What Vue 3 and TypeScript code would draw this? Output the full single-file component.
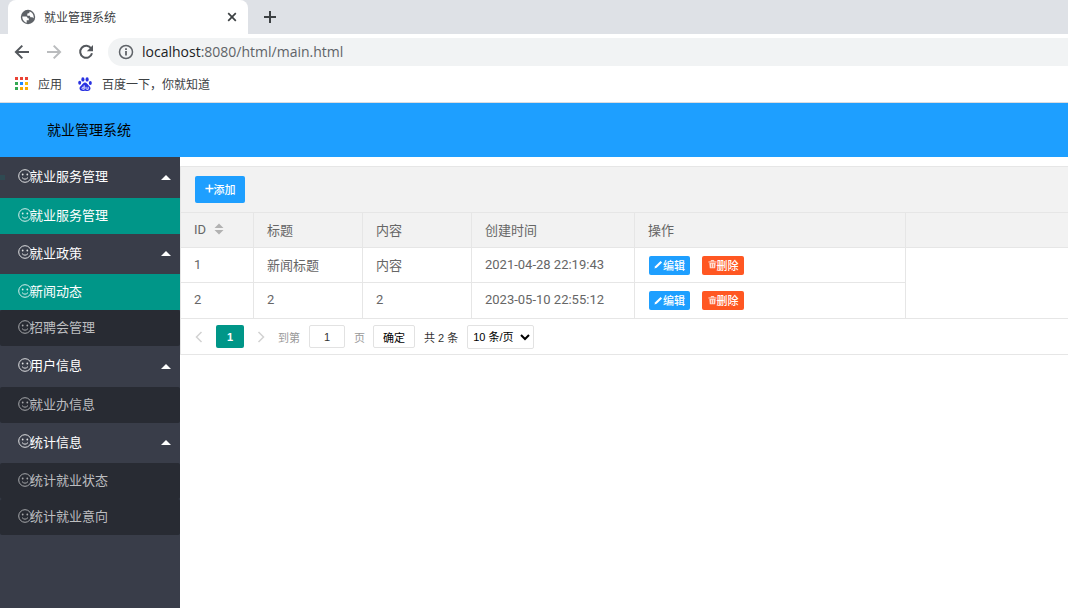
<script setup lang="ts">
import { ref } from 'vue'

interface MenuItem { label: string; active?: boolean }
interface MenuGroup { label: string; children: MenuItem[] }
interface NewsRow { id: number; title: string; content: string; created: string }

const menu: MenuGroup[] = [
  { label: '就业服务管理', children: [{ label: '就业服务管理', active: true }] },
  { label: '就业政策', children: [{ label: '新闻动态', active: true }, { label: '招聘会管理' }] },
  { label: '用户信息', children: [{ label: '就业办信息' }] },
  { label: '统计信息', children: [{ label: '统计就业状态' }, { label: '统计就业意向' }] },
]

const rows: NewsRow[] = [
  { id: 1, title: '新闻标题', content: '内容', created: '2021-04-28 22:19:43' },
  { id: 2, title: '2', content: '2', created: '2023-05-10 22:55:12' },
]

const appColors = ['#ea4335', '#ea4335', '#ea4335', '#34a853', '#1e88ff', '#fbbc04', '#34a853', '#f9ab00', '#f9ab00']
const page = ref('1')
const limit = ref('10')
</script>

<template>
  <div class="window">
    <div class="tabstrip">
      <div class="tab">
        <svg class="globe" viewBox="0 0 16 16" aria-hidden="true">
          <circle cx="8" cy="8" r="7.2" fill="#5f6368" />
          <path d="M2.300 7.600h3.400c1.300 0 1.800.7 1.800 1.700h1.300v1.900H6.700v2.600C4.200 13.300 2.200 10.800 2.300 7.600z" fill="#fff" />
          <path d="M9.600 2.500c2.400.7 4.100 2.900 4.100 5.500l-.2 1.300c-.6-.5-.9-1-1.700-1h-.9c-.7 0-.9-.7-.9-1.500H7.300V5.200c0-.6.500-.9 1-.9h.9z" fill="#fff" />
        </svg>
        <span class="tab-title">就业管理系统</span>
        <button class="icon-btn close" aria-label="关闭标签页">
          <svg viewBox="0 0 10 10"><path d="M1.200 1.200l7.600 7.600M8.800 1.200L1.200 8.800" stroke="#3c4043" stroke-width="1.700" /></svg>
        </button>
      </div>
      <button class="icon-btn plus" aria-label="新标签页">
        <svg viewBox="0 0 12 12"><path d="M6 0v12M0 6h12" stroke="#3c4043" stroke-width="2" /></svg>
      </button>
    </div>

    <div class="toolbar">
      <button class="icon-btn nav" aria-label="后退">
        <svg viewBox="0 0 16 16"><path d="M15 8H2.500M8.300 1.600L1.900 8l6.400 6.400" fill="none" stroke="#54585d" stroke-width="2" /></svg>
      </button>
      <button class="icon-btn nav" aria-label="前进">
        <svg viewBox="0 0 16 16"><path d="M1 8h12.500M7.700 1.600L14.100 8l-6.400 6.400" fill="none" stroke="#babcbe" stroke-width="2" /></svg>
      </button>
      <button class="icon-btn nav" aria-label="重新加载">
        <svg viewBox="0 0 16 16">
          <path d="M13.200 4.500A6 6 0 1 0 14 9.300" fill="none" stroke="#54585d" stroke-width="2" />
          <path d="M15 1v6.200H8.800z" fill="#54585d" />
        </svg>
      </button>
      <div class="address">
        <svg class="info" viewBox="0 0 16 16" aria-hidden="true">
          <circle cx="8" cy="8" r="6.500" fill="none" stroke="#5f6368" stroke-width="1.500" />
          <path d="M8 7v4.500M8 4.300v1.700" stroke="#5f6368" stroke-width="1.800" />
        </svg>
        <span class="url"><b>localhost</b>:8080/html/main.html</span>
      </div>
    </div>

    <div class="bookmarks">
      <a href="#apps">
        <svg class="apps" viewBox="0 0 13 13" aria-hidden="true">
          <rect v-for="(color, i) in appColors" :key="i" :x="(i % 3) * 5" :y="Math.floor(i / 3) * 5" width="3" height="3" :fill="color" />
        </svg>
        应用
      </a>
      <a href="#baidu">
        <svg class="paw" viewBox="0 0 14 14" aria-hidden="true">
          <g fill="#2932e1">
            <ellipse cx="4.900" cy="2.400" rx="1.600" ry="2.200" />
            <ellipse cx="9.100" cy="2.400" rx="1.600" ry="2.200" />
            <ellipse cx="1.700" cy="5.700" rx="1.500" ry="2" />
            <ellipse cx="12.300" cy="5.900" rx="1.500" ry="2" />
            <path d="M7 5.500c1.600 0 2.400 1.600 3.500 2.700 1.400 1.300 2.300 2.200 1.900 3.900-.5 2-2.300 2-5.400 1.600-3.100.4-4.900.4-5.400-1.600-.4-1.700.5-2.600 1.900-3.900C4.600 7.100 5.400 5.500 7 5.500z" />
          </g>
          <path d="M6.200 8.300v4M6.200 10.200H4.500q-1.200 1 0 2h1.700M8 9.800v1.800q.3.700 1 .7h1.200V9.800" fill="none" stroke="#fff" stroke-width=".9" />
        </svg>
        百度一下，你就知道
      </a>
    </div>

    <header class="header"><h1>就业管理系统</h1></header>

    <div class="body">
      <nav class="side">
        <span class="side-bar"></span>
        <div v-for="group in menu" :key="group.label" class="group">
          <button class="menu-row head">
            <svg class="smile" viewBox="0 0 14 14" aria-hidden="true">
              <circle cx="7" cy="7" r="6.300" /><path d="M4 8.600q3 3.200 6 0" />
              <circle class="eye" cx="4.700" cy="5.500" r=".9" /><circle class="eye" cx="9.300" cy="5.500" r=".9" />
            </svg>
            <span>{{ group.label }}</span>
            <i class="caret"></i>
          </button>
          <a v-for="item in group.children" :key="item.label" href="#menu" class="menu-row item" :class="{ active: item.active }">
            <svg class="smile" viewBox="0 0 14 14" aria-hidden="true">
              <circle cx="7" cy="7" r="6.300" /><path d="M4 8.600q3 3.200 6 0" />
              <circle class="eye" cx="4.700" cy="5.500" r=".9" /><circle class="eye" cx="9.300" cy="5.500" r=".9" />
            </svg>
            <span>{{ item.label }}</span>
          </a>
        </div>
      </nav>

      <main class="content">
        <section class="view">
          <div class="table-tools">
            <button class="btn add">
              <svg viewBox="0 0 10 10" aria-hidden="true"><path d="M5 .5v9M.5 5h9" stroke="#fff" stroke-width="1.700" /></svg>添加
            </button>
          </div>
          <table>
            <colgroup><col class="c-id"><col class="c-text"><col class="c-text"><col class="c-time"><col class="c-ops"><col></colgroup>
            <thead>
              <tr>
                <th>
                  <span class="sortable">ID
                    <svg class="sort" viewBox="0 0 10 12" aria-hidden="true"><path d="M5 .5L9.500 5h-9zM.5 7h9L5 11.500z" fill="#b2b2b2" /></svg>
                  </span>
                </th>
                <th>标题</th><th>内容</th><th>创建时间</th><th>操作</th><th class="filler"></th>
              </tr>
            </thead>
            <tbody>
              <tr v-for="row in rows" :key="row.id">
                <td>{{ row.id }}</td>
                <td>{{ row.title }}</td>
                <td>{{ row.content }}</td>
                <td>{{ row.created }}</td>
                <td>
                  <div class="ops">
                    <button class="btn small">
                      <svg viewBox="0 0 10 10" aria-hidden="true"><path d="M.5 9.500l.8-2.500L7.300 1l1.700 1.700L3 8.700z" fill="#fff" /></svg>编辑
                    </button>
                    <button class="btn small danger">
                      <svg viewBox="0 0 10 10" aria-hidden="true">
                        <path d="M3.500 1.500V.7h3v.8M.5 2.200h9" fill="none" stroke="#fff" />
                        <path d="M1.500 3.200h7l-.5 6H2z" fill="#fff" opacity=".8" />
                        <path d="M3.900 4.200v4M6.100 4.200v4" stroke="#ff5722" stroke-width=".6" />
                      </svg>删除
                    </button>
                  </div>
                </td>
                <td class="filler"></td>
              </tr>
            </tbody>
          </table>
          <div class="pager">
            <button class="arrow" aria-label="上一页"><svg viewBox="0 0 8 12"><path d="M6.500 1l-5 5 5 5" /></svg></button>
            <button class="current">1</button>
            <button class="arrow" aria-label="下一页"><svg viewBox="0 0 8 12"><path d="M1.500 1l5 5-5 5" /></svg></button>
            <label class="jump">到第<input v-model="page" type="text">页</label>
            <button class="confirm">确定</button>
            <span class="count">共 2 条</span>
            <select v-model="limit" aria-label="每页条数">
              <option value="10">10 条/页</option>
              <option value="20">20 条/页</option>
            </select>
          </div>
        </section>
      </main>
    </div>
  </div>
</template>

<style>
body { margin: 0; }
</style>

<style scoped>
* { box-sizing: border-box; }
.window {
  display: flex;
  flex-direction: column;
  min-height: 100vh;
  background: #fff;
  font-family: "Liberation Sans", "Noto Sans CJK SC", sans-serif;
  font-size: 13px;
}
button, input, select { font-family: inherit; margin: 0; }
a { text-decoration: none; }
svg { display: block; flex: none; }

.tabstrip { display: flex; height: 34px; background: #dee1e6; padding-left: 8px; }
.tab {
  display: flex;
  align-items: center;
  width: 240px;
  padding: 0 11px 0 12px;
  background: #fff;
  border-radius: 8px 8px 0 0;
}
.globe { width: 16px; height: 16px; }
.tab-title { flex: 1; margin-left: 8px; padding-bottom: 2px; font-size: 12px; color: #3c4043; }
.icon-btn { display: flex; align-items: center; justify-content: center; padding: 0; border: 0; background: none; }
.close svg { width: 10px; height: 10px; }
.plus { margin-left: 16px; }
.plus svg { width: 12px; height: 12px; }

.toolbar { display: flex; align-items: center; gap: 16px; height: 36px; padding-left: 14px; }
.nav svg { width: 16px; height: 16px; }
.address {
  display: flex;
  flex: 1;
  align-items: center;
  gap: 8px;
  height: 28px;
  margin-left: -2px;
  padding-left: 10px;
  background: #f1f3f4;
  border-radius: 14px 0 0 14px;
}
.info { width: 16px; height: 16px; }
.url { font: 14px/20px "Open Sans", sans-serif; color: #5f6368; }
.url b { font-weight: 400; color: #202124; }

.bookmarks {
  display: flex;
  gap: 16px;
  height: 33px;
  padding: 0 15px 5px;
  border-bottom: 1px solid #dadce0;
  font-size: 12px;
}
.bookmarks a { display: flex; align-items: center; gap: 10px; color: #3c4043; }
.apps { width: 13px; height: 13px; }
.paw { width: 14px; height: 14px; }

.header { display: flex; align-items: center; height: 54px; padding: 0 0 2px 47px; background: #1e9fff; }
h1 { margin: 0; font-size: 14px; font-weight: 400; color: #000; }

.body { display: flex; flex: 1; }
.side { position: relative; width: 180px; flex: none; background: #393d49; }
.side-bar { position: absolute; left: 0; top: 18px; width: 5px; height: 5px; background: #2f4a52; }
.menu-row {
  display: flex;
  align-items: center;
  width: 100%;
  height: 36px;
  padding: 0 9px 2px 18px;
  border: 0;
  background: none;
  font-size: 13px;
  color: #bdbec0;
}
.menu-row.head { height: 40px; padding-bottom: 4px; color: #fff; }
.group:nth-of-type(odd) .head { height: 41px; }
.menu-row.item { background: #282b33; border-radius: 2px; }
.menu-row.item span { padding-bottom: 2px; }
.menu-row.active { background: #009688; border-radius: 0; color: #fff; }
.smile { width: 14px; height: 14px; fill: none; stroke: currentColor; opacity: .85; margin-right: -2px; }
.smile .eye { fill: currentColor; stroke: none; }
.caret { margin: 3px 0 0 auto; border: 5px solid transparent; border-top: 0; border-bottom-color: #fff; }

.content { flex: 1; min-width: 0; padding-top: 9px; }
.view { border: 1px solid #e6e6e6; border-right: 0; color: #666; }
.table-tools { height: 46px; padding: 9px 14px; border-bottom: 1px solid #e6e6e6; background: #f2f2f2; }
.btn {
  display: flex;
  align-items: center;
  justify-content: center;
  padding: 0 0 1px;
  border: 0;
  border-radius: 2px;
  background: #1e9fff;
  color: #fff;
  font-size: 11px;
  font-weight: 500;
  white-space: nowrap;
}
.btn svg { width: 9px; height: 9px; }
.add { width: 50px; height: 27px; padding-bottom: 2px; }
.small { width: 41px; height: 19px; }
.danger { width: 42px; background: #ff5722; }
.ops { display: flex; gap: 12px; padding: 2px 0 0 1px; }

table { width: 100%; table-layout: fixed; border-collapse: separate; border-spacing: 0; font-family: Roboto, "Noto Sans CJK SC", sans-serif; }
.c-id { width: 73px; }
.c-text { width: 109px; }
.c-time { width: 163px; }
.c-ops { width: 271px; }
th, td {
  height: 35px;
  padding: 0 13px 2px;
  border: 0 solid #e6e6e6;
  border-width: 0 1px 1px 0;
  text-align: left;
  font-weight: 400;
  white-space: nowrap;
}
th { background: #f2f2f2; }
tbody tr:last-child td { height: 36px; }
.filler { border-right: 0; }
td.filler { border-bottom: 0; }
tbody tr:last-child .filler { border-bottom: 1px solid #e6e6e6; }
.sortable { display: flex; align-items: center; gap: 8px; }
.sort { width: 10px; height: 12px; }

.pager { display: flex; align-items: center; height: 35px; padding-left: 14px; font-size: 11px; color: #999; }
.arrow { display: flex; justify-content: center; width: 8px; padding: 0; border: 0; background: none; }
.arrow svg { width: 8px; height: 12px; fill: none; stroke: #d2d2d2; stroke-width: 1.5; }
.current { width: 28px; height: 23px; margin: 0 13px; padding: 0; border: 0; border-radius: 2px; background: #009688; color: #fff; font-size: 11px; font-weight: 700; }
.jump { display: flex; align-items: center; gap: 9px; margin-left: 13px; }
.jump input { width: 36px; height: 23px; padding: 0; border: 1px solid #e2e2e2; border-radius: 2px; font-size: 11px; text-align: center; color: #333; }
.confirm { width: 42px; height: 23px; margin: 0 9px 0 8px; padding: 0; border: 1px solid #e2e2e2; border-radius: 2px; background: #fff; font-size: 11px; color: #000; }
.count { color: #333; }
select { width: 67px; height: 24px; margin-left: 9px; padding: 0 1px; border: 1px solid #e2e2e2; border-radius: 2px; background: #fff; font-size: 11px; color: #000; }
</style>
